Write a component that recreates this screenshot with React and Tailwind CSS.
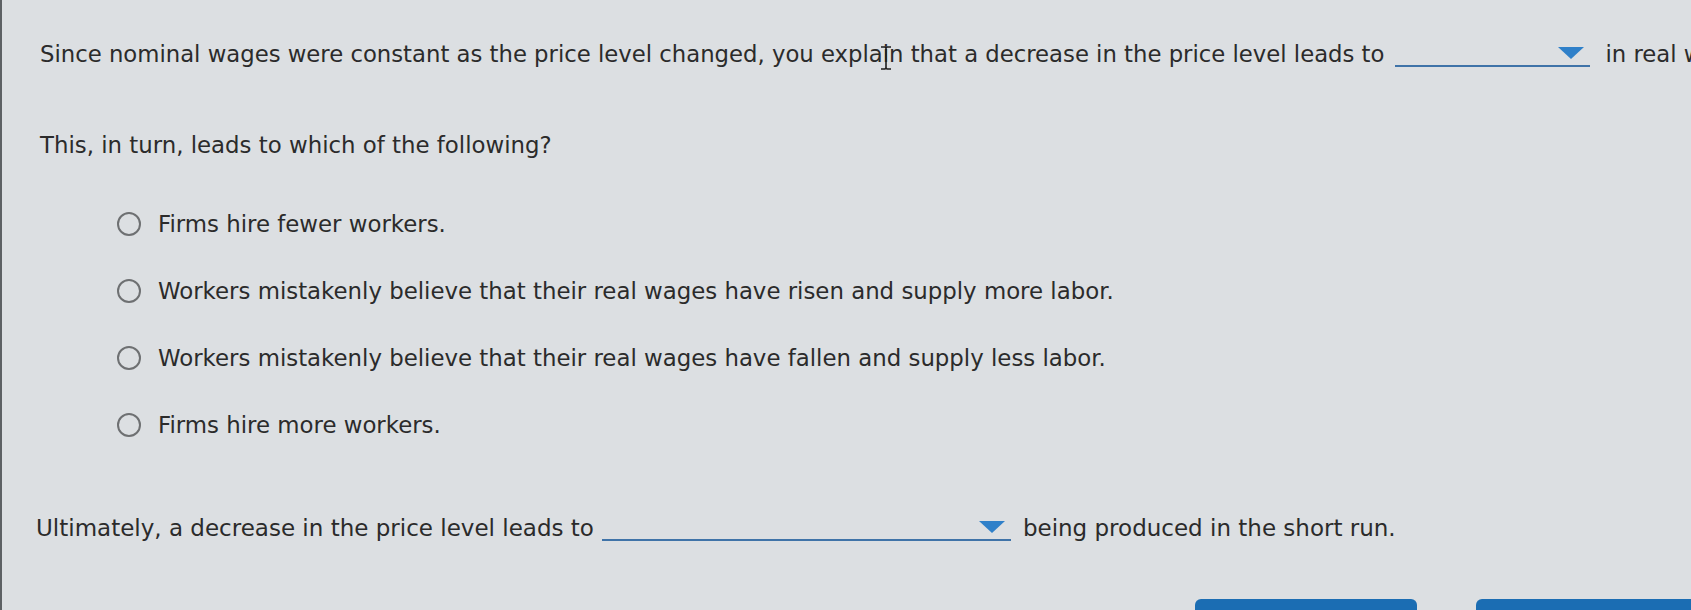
import React from 'react';

const options = [
  'Firms hire fewer workers.',
  'Workers mistakenly believe that their real wages have risen and supply more labor.',
  'Workers mistakenly believe that their real wages have fallen and supply less labor.',
  'Firms hire more workers.',
];

function Dropdown({ width }) {
  return (
    <div className={`relative h-[28px] shrink-0 border-b-2 border-[#3f73a8] ${width}`}>
      <svg
        className="absolute right-[6px] top-[8px]"
        width="26"
        height="12"
        viewBox="0 0 26 12"
      >
        <polygon points="0,0 26,0 13,12" fill="#2f80c9" />
      </svg>
    </div>
  );
}

function Radio({ label }) {
  return (
    <div className="flex h-[30px] items-center">
      <span className="ml-[115px] h-[24px] w-[24px] shrink-0 rounded-full border-2 border-[#6e7072]" />
      <span className="ml-[17px] leading-[30px]">{label}</span>
    </div>
  );
}

export default function App() {
  return (
    <div
      className="relative h-[610px] w-[1691px] overflow-hidden border-l-2 border-[#5d6164] bg-[#dcdfe2] text-[22.85px] text-[#2b2b2b]"
      style={{ fontFamily: '"DejaVu Sans", Verdana, sans-serif' }}
    >
      <div className="flex flex-col whitespace-nowrap pt-[39px]">
        {/* first sentence with dropdown */}
        <div className="flex h-[30px] items-start pl-[38px] text-[22.75px]">
          <span className="leading-[30px]">
            Since nominal wages were constant as the price level changed, you explain that a decrease in the price level leads to
          </span>
          <div className="ml-[11px]">
            <Dropdown width="w-[195px]" />
          </div>
          <span className="ml-[15px] leading-[30px]">in real wages.</span>
        </div>

        <div className="mt-[61px] flex h-[30px] items-start pl-[38px]">
          <span className="leading-[30px]">This, in turn, leads to which of the following?</span>
        </div>

        <div className="mt-[49px] flex flex-col gap-[37px]">
          {options.map((o) => (
            <Radio key={o} label={o} />
          ))}
        </div>

        {/* final sentence */}
        <div className="mt-[73px] flex h-[30px] items-start pl-[34px] text-[23px]">
          <span className="leading-[30px]">Ultimately, a decrease in the price level leads to</span>
          <div className="ml-[8px]">
            <Dropdown width="w-[409px]" />
          </div>
          <span className="ml-[12px] leading-[30px]">being produced in the short run.</span>
        </div>

        <div className="mt-[56px] flex gap-[59px] pl-[1193px]">
          <div className="h-[40px] w-[222px] shrink-0 rounded-[6px] bg-[#1b6db3]" />
          <div className="h-[40px] w-[240px] shrink-0 rounded-[6px] bg-[#1b6db3]" />
        </div>
      </div>

      {/* text cursor over the first sentence */}
      <svg className="absolute left-[877px] top-[46px]" width="14" height="24" viewBox="0 0 14 24">
        <path d="M2 1h4l1 1 1-1h4M7 2v20M2 23h4l1-1 1 1h4" stroke="#1e1e1e" strokeWidth="1.6" fill="none" />
      </svg>
    </div>
  );
}
